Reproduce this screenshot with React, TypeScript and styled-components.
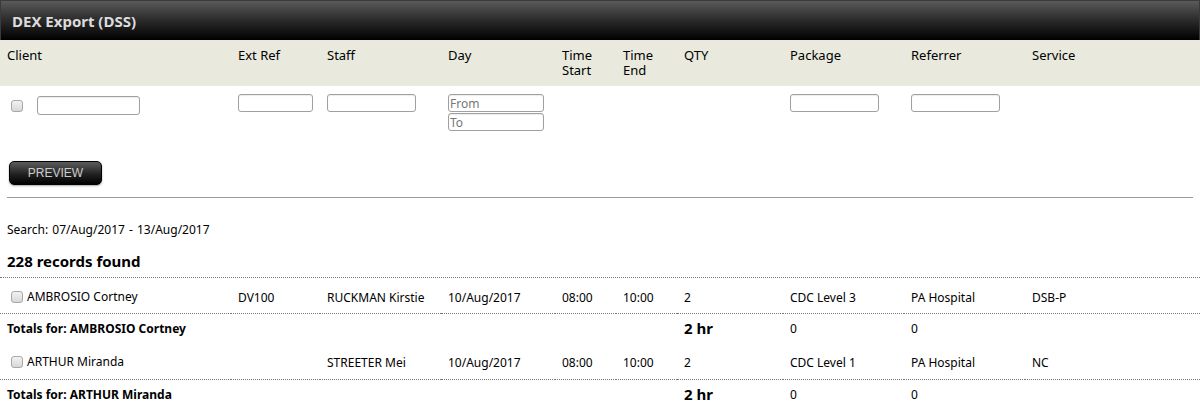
import React from "react";
import styled, { createGlobalStyle } from "styled-components";

const GlobalStyle = createGlobalStyle`
	body {
		margin: 0;
		background: white;
		font-family: "Noto Sans", "DejaVu Sans", sans-serif;
		font-size: 12px;
		color: #000;
	}
`;

const columns = [
	{ key: "client", label: "Client", width: 231 },
	{ key: "ext", label: "Ext Ref", width: 89 },
	{ key: "staff", label: "Staff", width: 121 },
	{ key: "day", label: "Day", width: 114 },
	{ key: "start", label: "Time\nStart", width: 61 },
	{ key: "end", label: "Time\nEnd", width: 61 },
	{ key: "qty", label: "QTY", width: 106 },
	{ key: "package", label: "Package", width: 121 },
	{ key: "referrer", label: "Referrer", width: 121 },
	{ key: "service", label: "Service", width: 175 },
];

const records = [
	{
		client: "AMBROSIO Cortney",
		ext: "DV100",
		staff: "RUCKMAN Kirstie",
		day: "10/Aug/2017",
		start: "08:00",
		end: "10:00",
		qty: "2",
		pkg: "CDC Level 3",
		referrer: "PA Hospital",
		service: "DSB-P",
	},
	{
		client: "ARTHUR Miranda",
		ext: "",
		staff: "STREETER Mei",
		day: "10/Aug/2017",
		start: "08:00",
		end: "10:00",
		qty: "2",
		pkg: "CDC Level 1",
		referrer: "PA Hospital",
		service: "NC",
	},
];

const Colgroup = () => (
	<colgroup>
		{columns.map((c) => (
			<col key={c.key} style={{ width: c.width }} />
		))}
	</colgroup>
);

const App = () => {
	return (
		<>
			<GlobalStyle />
			<Page>
				<TitleBar>DEX Export (DSS)</TitleBar>
				<Grid>
					<Colgroup />
					<thead>
						<tr>
							{columns.map((c) => (
								<HeadCell key={c.key}>{c.label}</HeadCell>
							))}
						</tr>
					</thead>
					<tbody>
						<tr>
							<FilterCell>
								<ClientFilter>
									<Check type="checkbox" />
									<TextInput $width={103} $height={19} />
								</ClientFilter>
							</FilterCell>
							<FilterCell>
								<TextInput $width={75} />
							</FilterCell>
							<FilterCell>
								<TextInput $width={89} />
							</FilterCell>
							<FilterCell>
								<DateStack>
									<TextInput $width={96} placeholder="From" />
									<TextInput $width={96} placeholder="To" />
								</DateStack>
							</FilterCell>
							<FilterCell />
							<FilterCell />
							<FilterCell />
							<FilterCell>
								<TextInput $width={89} />
							</FilterCell>
							<FilterCell>
								<TextInput $width={89} />
							</FilterCell>
							<FilterCell />
						</tr>
					</tbody>
				</Grid>
				<ButtonRow>
					<PreviewButton>PREVIEW</PreviewButton>
				</ButtonRow>
				<Divider />
				<SearchLine>Search: 07/Aug/2017 - 13/Aug/2017</SearchLine>
				<RecordsFound>228 records found</RecordsFound>
				<Grid>
					<Colgroup />
					<tbody>
						{records.map((r, i) => (
							<React.Fragment key={r.client}>
								<DataRow>
									<DataCell $first={i === 0}>
										<NameWrap>
											<RowCheck type="checkbox" />
											{r.client}
										</NameWrap>
									</DataCell>
									<DataCell $first={i === 0}>{r.ext}</DataCell>
									<DataCell $first={i === 0}>{r.staff}</DataCell>
									<DataCell $first={i === 0}>{r.day}</DataCell>
									<DataCell $first={i === 0}>{r.start}</DataCell>
									<DataCell $first={i === 0}>{r.end}</DataCell>
									<DataCell $first={i === 0}>{r.qty}</DataCell>
									<DataCell $first={i === 0}>{r.pkg}</DataCell>
									<DataCell $first={i === 0}>{r.referrer}</DataCell>
									<DataCell $first={i === 0}>{r.service}</DataCell>
								</DataRow>
								<TotalRow>
									<TotalCell colSpan={6}>
										<strong>Totals for: {r.client}</strong>
									</TotalCell>
									<TotalCell>
										<Hours>2 hr</Hours>
									</TotalCell>
									<TotalCell>0</TotalCell>
									<TotalCell>0</TotalCell>
									<TotalCell />
								</TotalRow>
							</React.Fragment>
						))}
						<DataRow>
							<DataCell colSpan={10}>
								<NameWrap>
									<RowCheck type="checkbox" />
								</NameWrap>
							</DataCell>
						</DataRow>
					</tbody>
				</Grid>
			</Page>
		</>
	);
};

export default App;

const Page = styled.div`
	width: 1200px;
	overflow: hidden;
`;

const TitleBar = styled.div`
	box-sizing: border-box;
	height: 40px;
	padding: 0 11px;
	display: flex;
	align-items: center;
	border: 1px solid #3a3a3a;
	border-bottom: none;
	background: linear-gradient(to bottom, #5a5a5a 0%, #2a2a2a 50%, #000 100%);
	color: #dcdcdc;
	font-size: 15px;
	font-weight: 700;
`;

const Grid = styled.table`
	width: 1200px;
	table-layout: fixed;
	border-collapse: collapse;
	border-spacing: 0;
`;

const HeadCell = styled.th`
	height: 46px;
	box-sizing: border-box;
	padding: 8px 7px 0;
	vertical-align: top;
	text-align: left;
	background: #e9e9de;
	font-weight: 400;
	font-size: 13px;
	line-height: 15px;
	white-space: pre-line;
`;

const FilterCell = styled.td`
	padding: 8px 7px 0;
	height: 55px;
	box-sizing: border-box;
	vertical-align: top;
`;

const ClientFilter = styled.div`
	display: flex;
	align-items: center;
	gap: 14px;
	padding: 2px 0 0 4px;
`;

const Check = styled.input`
	margin: 0;
	width: 12px;
	height: 12px;
	appearance: none;
	border: 1px solid #a8a8a8;
	border-radius: 3px;
	background: linear-gradient(#f2f2f2, #d8d8d8);
`;

const RowCheck = styled(Check)`
	margin-right: 4px;
`;

const TextInput = styled.input<{ $width: number; $height?: number }>`
	display: block;
	box-sizing: border-box;
	width: ${(p) => p.$width}px;
	height: ${(p) => p.$height ?? 18}px;
	margin: 0;
	padding: 0 1px;
	border: 1px solid #a0a0a0;
	border-radius: 3px;
	box-shadow: inset 0 1px 1px rgba(0, 0, 0, 0.08);
	background: white;
	font-family: "Noto Sans", sans-serif;
	font-size: 12px;

	&::placeholder {
		color: #777;
	}
`;

const DateStack = styled.div`
	display: flex;
	flex-direction: column;
	gap: 1px;
`;

const ButtonRow = styled.div`
	padding: 20px 9px 0;
`;

const PreviewButton = styled.button`
	width: 93px;
	height: 24px;
	border: 1px solid #000;
	border-radius: 5px;
	background: linear-gradient(to bottom, #5c5c5c 0%, #222 55%, #000 100%);
	color: #ccc;
	font-family: "Liberation Sans", Arial, sans-serif;
	font-size: 12px;
	box-shadow: 0 1px 2px rgba(0, 0, 0, 0.35);
	cursor: pointer;
`;

const Divider = styled.hr`
	margin: 12px 7px 0;
	border: none;
	border-top: 1px solid #9a9a9a;
`;

const SearchLine = styled.div`
	padding: 24px 7px 0;
	font-size: 12px;
	line-height: 16px;
	word-spacing: 1px;
`;

const RecordsFound = styled.div`
	padding: 14px 7px 7px;
	font-size: 15px;
	font-weight: 700;
	line-height: 18px;
	border-bottom: 1px dotted #777;
`;

const DataRow = styled.tr`
	border-bottom: 1px dotted #777;
`;

const DataCell = styled.td<{ $first?: boolean }>`
	box-sizing: border-box;
	height: ${(p) => (p.$first ? 35 : 34)}px;
	padding: ${(p) => (p.$first ? 6 : 3)}px 7px 0;
	font-size: 12px;
	line-height: 16px;
	white-space: nowrap;
`;

const NameWrap = styled.span`
	display: inline-flex;
	align-items: center;
	padding-left: 4px;
`;

const TotalRow = styled.tr``;

const TotalCell = styled.td`
	box-sizing: border-box;
	height: 32px;
	padding: 0 7px;
	font-size: 12px;
	line-height: 16px;
	white-space: nowrap;
`;

const Hours = styled.strong`
	font-size: 15px;
`;
